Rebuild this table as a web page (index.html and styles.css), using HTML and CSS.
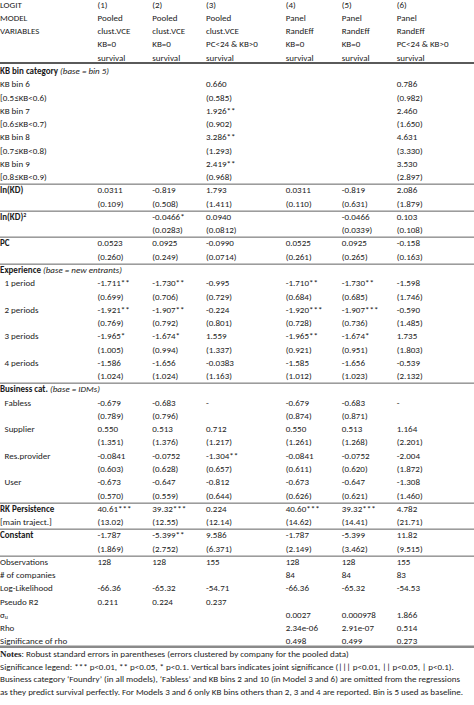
FILE: index.html
```html
<!DOCTYPE html>
<html>
<head>
<meta charset="utf-8">
<link rel="stylesheet" href="styles.css">
</head>
<body>
<div class="tbl">
  <div class="row"><span>LOGIT</span><span>(1)</span><span>(2)</span><span>(3)</span><span>(4)</span><span>(5)</span><span>(6)</span></div>
  <div class="row"><span>MODEL</span><span>Pooled</span><span>Pooled</span><span>Pooled</span><span>Panel</span><span>Panel</span><span>Panel</span></div>
  <div class="row"><span>VARIABLES</span><span>clust.VCE</span><span>clust.VCE</span><span>clust.VCE</span><span>RandEff</span><span>RandEff</span><span>RandEff</span></div>
  <div class="row"><span></span><span>KB=0</span><span>KB=0</span><span>PC&lt;24 &amp; KB&gt;0</span><span>KB=0</span><span>KB=0</span><span>PC&lt;24 &amp; KB&gt;0</span></div>
  <div class="row hdr-end"><span></span><span>survival</span><span>survival</span><span>survival</span><span>survival</span><span>survival</span><span>survival</span></div>

  <div class="row"><span><b>KB bin category</b> <i>(base = bin 5)</i></span><span></span><span></span><span></span><span></span><span></span><span></span></div>
  <div class="row"><span>KB bin 6</span><span></span><span></span><span>0.660</span><span></span><span></span><span>0.786</span></div>
  <div class="row"><span>[0.5≤KB&lt;0.6)</span><span></span><span></span><span>(0.585)</span><span></span><span></span><span>(0.982)</span></div>
  <div class="row"><span>KB bin 7</span><span></span><span></span><span>1.926**</span><span></span><span></span><span>2.460</span></div>
  <div class="row"><span>[0.6≤KB&lt;0.7)</span><span></span><span></span><span>(0.902)</span><span></span><span></span><span>(1.650)</span></div>
  <div class="row"><span>KB bin 8</span><span></span><span></span><span>3.286**</span><span></span><span></span><span>4.631</span></div>
  <div class="row"><span>[0.7≤KB&lt;0.8)</span><span></span><span></span><span>(1.293)</span><span></span><span></span><span>(3.330)</span></div>
  <div class="row"><span>KB bin 9</span><span></span><span></span><span>2.419**</span><span></span><span></span><span>3.530</span></div>
  <div class="row"><span>[0.8≤KB&lt;0.9)</span><span></span><span></span><span>(0.968)</span><span></span><span></span><span>(2.897)</span></div>

  <div class="row sep"><span><b>ln(KD)</b></span><span>0.0311</span><span>-0.819</span><span>1.793</span><span>0.0311</span><span>-0.819</span><span>2.086</span></div>
  <div class="row"><span></span><span>(0.109)</span><span>(0.508)</span><span>(1.411)</span><span>(0.110)</span><span>(0.631)</span><span>(1.879)</span></div>

  <div class="row sep"><span><b>ln(KD)<sup>2</sup></b></span><span></span><span>-0.0466*</span><span>0.0940</span><span></span><span>-0.0466</span><span>0.103</span></div>
  <div class="row"><span></span><span></span><span>(0.0283)</span><span>(0.0812)</span><span></span><span>(0.0339)</span><span>(0.108)</span></div>

  <div class="row sep"><span><b>PC</b></span><span>0.0523</span><span>0.0925</span><span>-0.0990</span><span>0.0525</span><span>0.0925</span><span>-0.158</span></div>
  <div class="row"><span></span><span>(0.260)</span><span>(0.249)</span><span>(0.0714)</span><span>(0.261)</span><span>(0.265)</span><span>(0.163)</span></div>

  <div class="row sep"><span><b>Experience</b> <i>(base = new entrants)</i></span><span></span><span></span><span></span><span></span><span></span><span></span></div>
  <div class="row"><span class="ind">1 period</span><span>-1.711**</span><span>-1.730**</span><span>-0.995</span><span>-1.710**</span><span>-1.730**</span><span>-1.598</span></div>
  <div class="row"><span></span><span>(0.699)</span><span>(0.706)</span><span>(0.729)</span><span>(0.684)</span><span>(0.685)</span><span>(1.746)</span></div>
  <div class="row"><span class="ind">2 periods</span><span>-1.921**</span><span>-1.907**</span><span>-0.224</span><span>-1.920***</span><span>-1.907***</span><span>-0.590</span></div>
  <div class="row"><span></span><span>(0.769)</span><span>(0.792)</span><span>(0.801)</span><span>(0.728)</span><span>(0.736)</span><span>(1.485)</span></div>
  <div class="row"><span class="ind">3 periods</span><span>-1.965*</span><span>-1.674*</span><span>1.559</span><span>-1.965**</span><span>-1.674*</span><span>1.735</span></div>
  <div class="row"><span></span><span>(1.005)</span><span>(0.994)</span><span>(1.337)</span><span>(0.921)</span><span>(0.951)</span><span>(1.803)</span></div>
  <div class="row"><span class="ind">4 periods</span><span>-1.586</span><span>-1.656</span><span>-0.0383</span><span>-1.585</span><span>-1.656</span><span>-0.539</span></div>
  <div class="row"><span></span><span>(1.024)</span><span>(1.024)</span><span>(1.163)</span><span>(1.012)</span><span>(1.023)</span><span>(2.132)</span></div>

  <div class="row sep"><span><b>Business cat.</b> <i>(base = IDMs)</i></span><span></span><span></span><span></span><span></span><span></span><span></span></div>
  <div class="row"><span class="ind">Fabless</span><span>-0.679</span><span>-0.683</span><span>-</span><span>-0.679</span><span>-0.683</span><span>-</span></div>
  <div class="row"><span></span><span>(0.789)</span><span>(0.796)</span><span></span><span>(0.874)</span><span>(0.871)</span><span></span></div>
  <div class="row"><span class="ind">Supplier</span><span>0.550</span><span>0.513</span><span>0.712</span><span>0.550</span><span>0.513</span><span>1.164</span></div>
  <div class="row"><span></span><span>(1.351)</span><span>(1.376)</span><span>(1.217)</span><span>(1.261)</span><span>(1.268)</span><span>(2.201)</span></div>
  <div class="row"><span class="ind">Res.provider</span><span>-0.0841</span><span>-0.0752</span><span>-1.304**</span><span>-0.0841</span><span>-0.0752</span><span>-2.004</span></div>
  <div class="row"><span></span><span>(0.603)</span><span>(0.628)</span><span>(0.657)</span><span>(0.611)</span><span>(0.620)</span><span>(1.872)</span></div>
  <div class="row"><span class="ind">User</span><span>-0.673</span><span>-0.647</span><span>-0.812</span><span>-0.673</span><span>-0.647</span><span>-1.308</span></div>
  <div class="row"><span></span><span>(0.570)</span><span>(0.559)</span><span>(0.644)</span><span>(0.626)</span><span>(0.621)</span><span>(1.460)</span></div>

  <div class="row sep"><span><b>RK Persistence</b></span><span>40.61***</span><span>39.32***</span><span>0.224</span><span>40.60***</span><span>39.32***</span><span>4.782</span></div>
  <div class="row"><span>[main traject.]</span><span>(13.02)</span><span>(12.55)</span><span>(12.14)</span><span>(14.62)</span><span>(14.41)</span><span>(21.71)</span></div>

  <div class="row sep"><span><b>Constant</b></span><span>-1.787</span><span>-5.399**</span><span>9.586</span><span>-1.787</span><span>-5.399</span><span>11.82</span></div>
  <div class="row"><span></span><span>(1.869)</span><span>(2.752)</span><span>(6.371)</span><span>(2.149)</span><span>(3.462)</span><span>(9.515)</span></div>

  <div class="row sep"><span>Observations</span><span>128</span><span>128</span><span>155</span><span>128</span><span>128</span><span>155</span></div>
  <div class="row"><span># of companies</span><span></span><span></span><span></span><span>84</span><span>84</span><span>83</span></div>
  <div class="row"><span>Log-Likelihood</span><span>-66.36</span><span>-65.32</span><span>-54.71</span><span>-66.36</span><span>-65.32</span><span>-54.53</span></div>
  <div class="row"><span>Pseudo R2</span><span>0.211</span><span>0.224</span><span>0.237</span><span></span><span></span><span></span></div>
  <div class="row"><span>σ<sub>u</sub></span><span></span><span></span><span></span><span>0.0027</span><span>0.000978</span><span>1.866</span></div>
  <div class="row"><span>Rho</span><span></span><span></span><span></span><span>2.34e-06</span><span>2.91e-07</span><span>0.514</span></div>
  <div class="row end"><span>Significance of rho</span><span></span><span></span><span></span><span>0.498</span><span>0.499</span><span>0.273</span></div>
</div>
<div class="notes">
  <p><b class="nb">Notes</b>: Robust standard errors in parentheses (errors clustered by company for the pooled data)</p>
  <p>Significance legend: *** p&lt;0.01, ** p&lt;0.05, * p&lt;0.1. Vertical bars indicates joint significance (||| p&lt;0.01, || p&lt;0.05, | p&lt;0.1).</p>
  <p>Business category ‘Foundry’ (in all models), ‘Fabless’ and KB bins 2 and 10 (in Model 3 and 6) are omitted from the regressions</p>
  <p>as they predict survival perfectly. For Models 3 and 6 only KB bins others than 2, 3 and 4 are reported. Bin is 5 used as baseline.</p>
</div>
</body>
</html>
```

FILE: styles.css
```css
html, body {
  margin: 0;
  padding: 0;
  background: #ffffff;
}
body {
  width: 474px;
  height: 705px;
  overflow: hidden;
  color: #1b1b1b;
  font-family: Carlito, Lato, "Open Sans", sans-serif;
  font-size: 9px;
}
.tbl {
  margin-top: -2.34px;
}
.row {
  display: grid;
  grid-template-columns: 97.5px 54.8px 53.7px 79.7px 56px 55px 1fr;
  height: 13.28px;
  line-height: 13.28px;
  white-space: nowrap;
}
.row span {
  overflow: visible;
}
.row b {
  font-weight: 700;
}
.ind {
  padding-left: 4.5px;
}
sup {
  font-size: 6px;
  line-height: 0;
  vertical-align: 3px;
}
sub {
  font-size: 6px;
  line-height: 0;
  vertical-align: -1px;
}
.hdr-end {
  box-shadow: inset 0 -2px 0 #5a5a5a;
}
.sep {
  box-shadow: inset 0 1px 0 #c4c4c4, inset 0 2px 0 #9c9c9c;
}
.end {
  box-shadow: inset 0 -2.5px 0 #8a8a8a;
}
.notes {
  padding-top: 0.2px;
}
.notes p {
  margin: 0;
  height: 12.77px;
  line-height: 12.77px;
  white-space: nowrap;
}
.nb {
  font-family: "Liberation Serif", serif;
  font-weight: 700;
  font-size: 9px;
}
```
